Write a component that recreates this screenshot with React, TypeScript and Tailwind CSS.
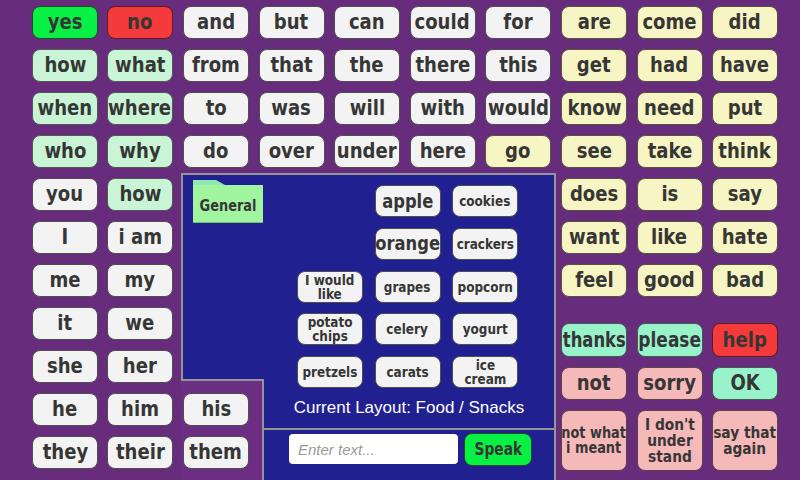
import React from "react";

type Tone = "white" | "mint" | "yellow" | "aqua" | "pink" | "green" | "red";

const tones: Record<Tone, string> = {
  white: "bg-[#f3f3f3] border-[#4e4e4e]",
  mint: "bg-[#c9f5d6] border-[#4e5a52]",
  yellow: "bg-[#f7f5c3] border-[#555340]",
  aqua: "bg-[#98f3cb] border-[#3f5a4e]",
  pink: "bg-[#f6b9b9] border-[#5a4444]",
  green: "bg-[#08f043] border-[#1f4d26]",
  red: "bg-[#f43a3a] border-[#5e1d1d]",
};

// The board uses a narrow Verdana-like bold that squeezes long words to fit,
// so DejaVu gets squeezed too; the tightest words get a stronger squeeze.
const squeeze = {
  normal: "[transform:scaleX(0.86)]",
  tight: "[transform:scaleX(0.81)]",
  tighter: "[transform:scaleX(0.78)]",
};

function Key({
  label,
  tone = "white",
  fit = "normal",
  className = "",
}: {
  label: string;
  tone?: Tone;
  fit?: keyof typeof squeeze;
  className?: string;
}) {
  return (
    <div
      className={`flex items-center justify-center rounded-[8px] border-[1.5px] text-center font-bold leading-none text-[#363636] ${tones[tone]} ${className}`}
    >
      <span className={`inline-block whitespace-pre ${squeeze[fit]}`}>{label}</span>
    </div>
  );
}

const leftWords: [string, Tone][] = [
  ["yes", "green"], ["no", "red"],
  ["how", "mint"], ["what", "mint"],
  ["when", "mint"], ["where", "mint"],
  ["who", "mint"], ["why", "mint"],
  ["you", "white"], ["how", "mint"],
  ["I", "white"], ["i am", "white"],
  ["me", "white"], ["my", "white"],
  ["it", "white"], ["we", "white"],
  ["she", "white"], ["her", "white"],
  ["he", "white"], ["him", "white"],
  ["they", "white"], ["their", "white"],
];

const middleWords: [string, Tone][] = [
  ["and", "white"], ["but", "white"], ["can", "white"], ["could", "white"], ["for", "white"],
  ["from", "white"], ["that", "white"], ["the", "white"], ["there", "white"], ["this", "white"],
  ["to", "white"], ["was", "white"], ["will", "white"], ["with", "white"], ["would", "white"],
  ["do", "white"], ["over", "white"], ["under", "white"], ["here", "white"], ["go", "yellow"],
];

const rightWords = [
  "are", "come", "did",
  "get", "had", "have",
  "know", "need", "put",
  "see", "take", "think",
  "does", "is", "say",
  "want", "like", "hate",
  "feel", "good", "bad",
];

// null = empty slot in the food grid
const foods: (null | { label: string; big?: boolean })[] = [
  null, { label: "apple", big: true }, { label: "cookies" },
  null, { label: "orange", big: true }, { label: "crackers" },
  { label: "I would\nlike" }, { label: "grapes" }, { label: "popcorn" },
  { label: "potato\nchips" }, { label: "celery" }, { label: "yogurt" },
  { label: "pretzels" }, { label: "carats" }, { label: "ice\ncream" },
];

function Folder() {
  return (
    <div className="flex w-[70px] flex-col">
      <div className="h-[5px] w-[32px] bg-[#8eeab4] [clip-path:polygon(0_0,72%_0,100%_100%,0_100%)]" />
      <div className="flex h-[38px] items-end justify-center border-b border-[#6fbf6f] bg-[#a0f59e] pb-[5px] text-[15px] font-bold text-[#363636]">
        <span className="inline-block [transform:scaleX(0.86)]">General</span>
      </div>
    </div>
  );
}

function FoodPanel() {
  return (
    <div className="mt-[5px] flex h-[307px] w-[375px]">
      <div className="flex w-[83px] flex-col">
        <div className="h-[206px] border-l-2 border-t-2 border-[#959595] bg-[#202091] pl-[10px] pt-[5px]">
          <Folder />
        </div>
        <div className="flex flex-1 flex-col gap-[10px] border-r-2 border-t-2 border-[#959595] bg-[#6c2e83] pl-[2px] pt-[12px]">
          <Key label="his" className="h-[33px] w-[66px] text-[21px]" />
          <Key label="them" className="h-[33px] w-[66px] text-[21px]" />
        </div>
      </div>
      <div className="flex flex-1 flex-col border-r-2 border-t-2 border-[#959595] bg-[#202091]">
        <div className="grid auto-rows-[32px] grid-cols-[66px_66px_66px] gap-x-[11.5px] gap-y-[10.75px] pl-[33px] pt-[10px]">
          {foods.map((f, i) =>
            f ? (
              <Key
                key={i}
                label={f.label}
                className={f.big ? "text-[19px]" : "text-[14px] leading-[15px]"}
              />
            ) : (
              <div key={i} />
            )
          )}
        </div>
        <div className="flex h-[40px] items-center justify-center font-['Liberation_Sans',sans-serif] text-[17px] text-white">
          Current Layout: Food / Snacks
        </div>
        <div className="flex flex-1 items-start gap-[6px] border-t-2 border-[#959595] pl-[25px] pt-[3px]">
          <input
            placeholder="Enter text..."
            className="mt-[1px] h-[30px] w-[169px] rounded-[4px] bg-white px-[9px] font-['Liberation_Sans',sans-serif] text-[15px] italic text-[#333] outline-none placeholder:text-[#9a9a9a]"
          />
          <Key label="Speak" tone="green" fit="tight" className="h-[33px] w-[68px] text-[17px]" />
        </div>
      </div>
    </div>
  );
}

export default function App() {
  return (
    <div className="flex h-[480px] w-[800px] overflow-hidden bg-[#682c7d] font-['DejaVu_Sans',sans-serif]">
      {/* columns 0-1 */}
      <div className="grid auto-rows-[33px] grid-cols-[66px_66px] content-start gap-x-[9px] gap-y-[10px] pl-[32px] pt-[6px]">
        {leftWords.map(([w, t], i) => (
          <Key key={i} label={w} tone={t} className="text-[21px]" />
        ))}
      </div>

      {/* columns 2-6 with the layout panel */}
      <div className="ml-[8px] flex w-[375px] flex-col pt-[6px]">
        <div className="grid auto-rows-[33px] grid-cols-[repeat(5,66px)] gap-x-[9.5px] gap-y-[10px] pl-[2px]">
          {middleWords.map(([w, t], i) => (
            <Key key={i} label={w} tone={t} className="text-[21px]" />
          ))}
        </div>
        <FoodPanel />
      </div>

      {/* columns 7-9 */}
      <div className="ml-[5px] flex flex-col pt-[6px]">
        <div className="grid auto-rows-[33px] grid-cols-[66px_66px_66px] gap-x-[9.5px] gap-y-[10px]">
          {rightWords.map((w) => (
            <Key key={w} label={w} tone="yellow" className="text-[21px]" />
          ))}
        </div>
        <div className="mt-[26px] grid grid-cols-[66px_66px_66px] grid-rows-[34px_33px_61px] gap-x-[9.5px] gap-y-[10px]">
          <Key label="thanks" tone="aqua" fit="tighter" className="text-[21px]" />
          <Key label="please" tone="aqua" fit="tight" className="text-[21px]" />
          <Key label="help" tone="red" className="text-[21px]" />
          <Key label="not" tone="pink" className="text-[21px]" />
          <Key label="sorry" tone="pink" className="text-[21px]" />
          <Key label="OK" tone="aqua" className="text-[21px]" />
          <Key label={"not what\ni meant"} tone="pink" className="text-[15px] leading-[20px]" />
          <Key label={"I don't\nunder\nstand"} tone="pink" className="text-[16px] leading-[20px]" />
          <Key label={"say that\nagain"} tone="pink" className="text-[16px] leading-[20px]" />
        </div>
      </div>
    </div>
  );
}
